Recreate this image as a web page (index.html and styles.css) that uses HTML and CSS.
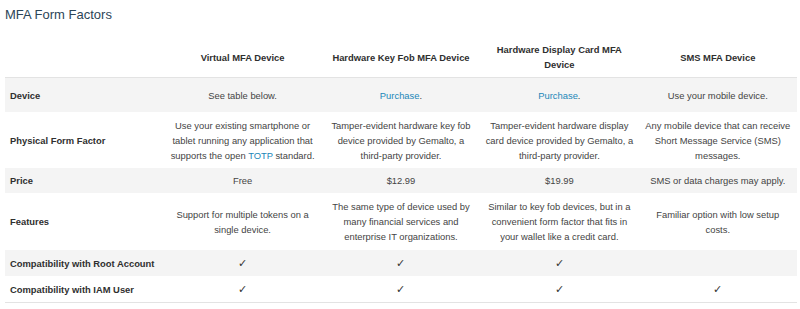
FILE: index.html
```html
<!DOCTYPE html>
<html>
<head>
<meta charset="utf-8">
<link rel="stylesheet" href="styles.css">
</head>
<body>
<h2 class="title">MFA Form Factors</h2>
<table class="mfa">
  <thead>
    <tr>
      <th class="corner"></th>
      <th>Virtual MFA Device</th>
      <th>Hardware Key Fob MFA Device</th>
      <th>Hardware Display Card MFA Device</th>
      <th>SMS MFA Device</th>
    </tr>
  </thead>
  <tbody>
    <tr class="alt r-device">
      <td class="label">Device</td>
      <td>See table below.</td>
      <td><a href="#">Purchase</a>.</td>
      <td><a href="#">Purchase</a>.</td>
      <td>Use your mobile device.</td>
    </tr>
    <tr class="r-form">
      <td class="label">Physical Form Factor</td>
      <td>Use your existing smartphone or tablet running any application that supports the open <a href="#">TOTP</a> standard.</td>
      <td>Tamper-evident hardware key fob device provided by Gemalto, a third-party provider.</td>
      <td>Tamper-evident hardware display card device provided by Gemalto, a third-party provider.</td>
      <td>Any mobile device that can receive Short Message Service (SMS) messages.</td>
    </tr>
    <tr class="alt r-price">
      <td class="label">Price</td>
      <td>Free</td>
      <td>$12.99</td>
      <td>$19.99</td>
      <td>SMS or data charges may apply.</td>
    </tr>
    <tr class="r-feat">
      <td class="label">Features</td>
      <td>Support for multiple tokens on a single device.</td>
      <td>The same type of device used by many financial services and enterprise IT organizations.</td>
      <td>Similar to key fob devices, but in a convenient form factor that fits in your wallet like a credit card.</td>
      <td>Familiar option with low setup costs.</td>
    </tr>
    <tr class="alt r-check">
      <td class="label">Compatibility with Root Account</td>
      <td class="chk">✓</td>
      <td class="chk">✓</td>
      <td class="chk">✓</td>
      <td class="chk"></td>
    </tr>
    <tr class="last r-check">
      <td class="label">Compatibility with IAM User</td>
      <td class="chk">✓</td>
      <td class="chk">✓</td>
      <td class="chk">✓</td>
      <td class="chk">✓</td>
    </tr>
  </tbody>
</table>
</body>
</html>
```
FILE: styles.css
```css
body {
  margin: 0;
  background: #ffffff;
  font-family: "Liberation Sans", Arial, sans-serif;
}
.title {
  margin: 0;
  padding: 7px 0 0 5px;
  font-size: 13px;
  font-weight: normal;
  color: #2d4658;
  line-height: 16px;
}
.mfa {
  margin: 14px 0 0 5px;
  width: 792px;
  table-layout: fixed;
  border-collapse: collapse;
  font-size: 9.4px;
  line-height: 15px;
  color: #444444;
}
.mfa th {
  font-weight: bold;
  color: #2f2f2f;
  text-align: center;
  padding: 5px 6px;
  border-bottom: 1px solid #e3e3e3;
  vertical-align: middle;
}
.mfa td {
  text-align: center;
  padding: 5px 5px;
  vertical-align: middle;
}
.mfa td.label {
  text-align: left;
  font-weight: bold;
  color: #2f2f2f;
  padding-left: 5px;
}
.mfa td.chk {
  font-size: 11px;
  color: #333333;
}
.mfa tr.alt td {
  background: #f4f4f4;
}
.mfa tr.r-device td {
  height: 24px;
}
.mfa tr.r-form td {
  height: 46px;
}
.mfa tr.r-price td {
  height: 15px;
}
.mfa tr.r-feat td {
  height: 47px;
}
.mfa tr.r-check td {
  height: 16px;
}
.mfa tr.last td {
  border-bottom: 1px solid #e3e3e3;
}
.mfa a {
  color: #1b87b8;
  text-decoration: none;
}
```
